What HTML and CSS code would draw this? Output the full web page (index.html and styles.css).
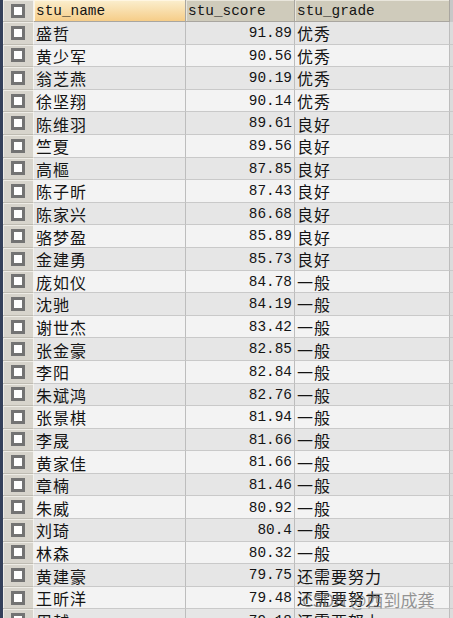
FILE: index.html
```html
<!DOCTYPE html>
<html>
<head>
<meta charset="utf-8">
<link rel="stylesheet" href="styles.css">
</head>
<body>
<div class="frame">
  <div class="strip"></div>
  <div class="grid" id="grid">
    <div class="row head">
      <div class="cell chk"><span class="box"></span></div>
      <div class="cell h sorted"><span class="mono">stu_name</span></div>
      <div class="cell h"><span class="mono">stu_score</span></div>
      <div class="cell h"><span class="mono">stu_grade</span></div>
      <div class="cell tail"></div>
    </div>
  </div>
  <div class="mark">CSDN @西到成龚</div>
</div>
<script src="app.js"></script>
</body>
</html>
```
FILE: app.js
```js
const data = [
["盛哲","91.89","优秀"],["黄少军","90.56","优秀"],["翁芝燕","90.19","优秀"],["徐坚翔","90.14","优秀"],
["陈维羽","89.61","良好"],["竺夏","89.56","良好"],["高樞","87.85","良好"],["陈子昕","87.43","良好"],
["陈家兴","86.68","良好"],["骆梦盈","85.89","良好"],["金建勇","85.73","良好"],["庞如仪","84.78","一般"],
["沈驰","84.19","一般"],["谢世杰","83.42","一般"],["张金豪","82.85","一般"],["李阳","82.84","一般"],
["朱斌鸿","82.76","一般"],["张景棋","81.94","一般"],["李晟","81.66","一般"],["黄家佳","81.66","一般"],
["章楠","81.46","一般"],["朱威","80.92","一般"],["刘琦","80.4","一般"],["林森","80.32","一般"],
["黄建豪","79.75","还需要努力"],["王昕洋","79.48","还需要努力"],["周越","79.18","还需要努力"]
];
const g = document.getElementById('grid');
data.forEach((r, i) => {
  const row = document.createElement('div');
  row.className = 'row data ' + (i % 2 ? 'even' : 'odd');
  row.innerHTML =
    '<div class="cell chk"><span class="box"></span></div>' +
    '<div class="cell"><span class="cn">' + r[0] + '</span></div>' +
    '<div class="cell num"><span class="mono">' + r[1] + '</span></div>' +
    '<div class="cell"><span class="cn">' + r[2] + '</span></div>' +
    '<div class="cell tail"></div>';
  g.appendChild(row);
});
```
FILE: styles.css
```css
html, body {
  margin: 0;
  padding: 0;
  background: #e6e6e6;
  overflow: hidden;
}
.frame {
  position: relative;
  display: flex;
  width: 453px;
  height: 618px;
  overflow: hidden;
}
.strip {
  width: 3px;
  flex: none;
  background: #34405a;
}
.grid {
  flex: 1;
  display: flex;
  flex-direction: column;
}
.row {
  display: grid;
  grid-template-columns: 31px 152px 109px 155px 3px;
  flex: none;
  box-sizing: border-box;
}
.row.head {
  height: 22px;
}
.row.data {
  height: 22.6px;
}
.cell {
  box-sizing: border-box;
  border-right: 1px solid #bdbdbd;
  border-bottom: 1px solid #c9c9c9;
  display: flex;
  align-items: center;
  padding-left: 2px;
  overflow: hidden;
  white-space: nowrap;
  color: #141414;
}
.odd .cell { background: #e6e6e6; }
.even .cell { background: #f3f3f3; }
.cell.chk {
  background: #d7d4cc !important;
  justify-content: center;
  padding: 0;
  border-right: 1px solid #f4f3ef;
  border-bottom: 1px solid #bebbb2;
  box-shadow: inset 1px 1px 0 #eeece6;
}
.box {
  width: 14px;
  height: 14px;
  box-sizing: border-box;
  border: 3px solid #737373;
  background: #ffffff;
  margin-left: -1px;
}
.cell.tail {
  background: #dcdcdc !important;
  border-right: none;
}
.head .cell.h {
  background: #cfcbbb;
  border-right: 1px solid #a9a6a0;
  border-bottom: 1px solid #a9a6a0;
  box-shadow: inset 1px 1px 0 #e9e6dc;
}
.head .cell.h.sorted {
  background: linear-gradient(#fbefcf, #f6cd88);
  box-shadow: inset 1px 1px 0 #fff6e2;
}
.head .cell.tail {
  background: #c8c8c8 !important;
}
.cell.num {
  justify-content: flex-end;
  padding-left: 0;
  padding-right: 2px;
}
.mono {
  font-family: "Liberation Mono", "DejaVu Sans Mono", monospace;
  font-size: 14.4px;
  line-height: 1;
  padding-top: 1px;
}
.cn {
  font-family: "Noto Sans CJK SC", sans-serif;
  font-size: 16px;
  letter-spacing: 1px;
  line-height: 1;
  padding-top: 1px;
}
.mark {
  position: absolute;
  left: 302px;
  top: 587px;
  font-family: "Noto Sans CJK SC", sans-serif;
  font-size: 17px;
  color: rgba(110, 110, 110, 0.72);
  white-space: nowrap;
}
```
